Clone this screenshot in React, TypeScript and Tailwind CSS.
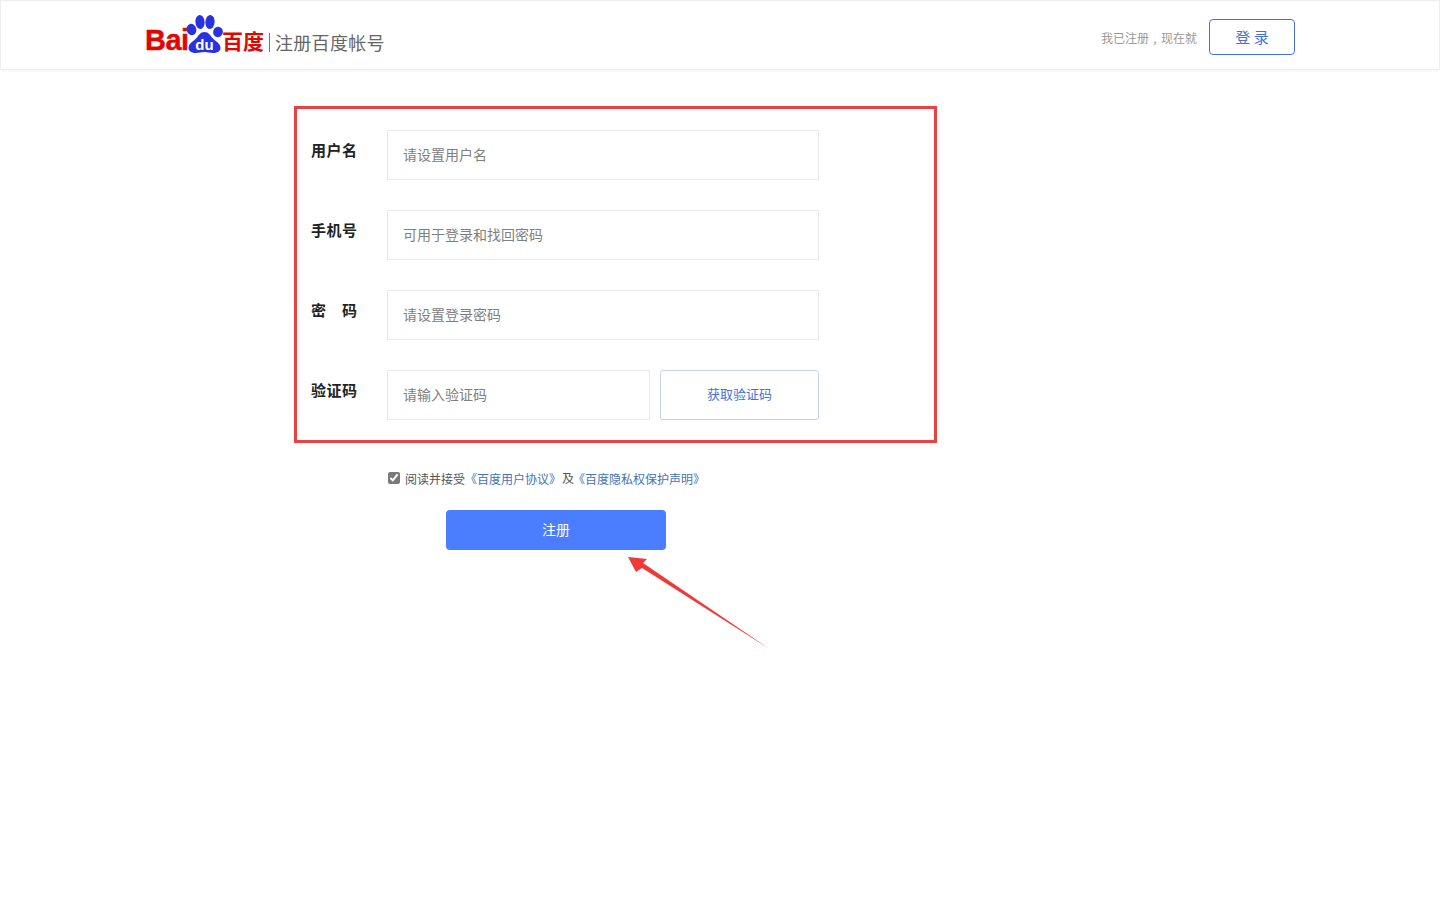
const cjk = "font-['Noto_Sans_CJK_SC','Liberation_Sans',sans-serif]";

function Logo() {
  return (
    <div className="flex items-center h-[40px] w-[119px] relative">
      <span className="font-['Liberation_Sans',sans-serif] font-bold text-[29px] leading-none text-[#e10601] tracking-[-0.5px] mt-[11px] w-[43px] [-webkit-text-stroke:0.4px_#e10601]">Bai</span>
      <svg width="37" height="40" viewBox="0 0 37 40" className="shrink-0 -ml-[2px]">
        <ellipse cx="5.500" cy="14.500" rx="4.800" ry="5.800" transform="rotate(-15 5.500 14.500)" fill="#2932e1" />
        <ellipse cx="14" cy="7" rx="4.600" ry="7" transform="rotate(-4 14 7)" fill="#2932e1" />
        <ellipse cx="24" cy="7" rx="4.600" ry="7" transform="rotate(4 24 7)" fill="#2932e1" />
        <ellipse cx="32" cy="17" rx="4.800" ry="5.200" transform="rotate(15 32 17)" fill="#2932e1" />
        <path d="M18.500 17c-4 0-5.500 3-8 6C8 26 2.500 28 2.500 33c0 3.500 3.500 5 7.500 5 3 0 5.500-1 8.500-1s5.500 1 8.500 1c4 0 7.500-1.500 7.500-5 0-5-5.500-7-8-10C24 20 22.500 17 18.500 17z" fill="#2932e1" />
        <text x="18.500" y="35" textAnchor="middle" fontFamily="Liberation Sans, sans-serif" fontWeight="700" fontSize="15" fill="#ffffff">du</text>
      </svg>
      <span className={`${cjk} font-bold text-[21px] leading-none text-[#e10601] mt-[10px] -ml-[1px] whitespace-nowrap`}>百度</span>
    </div>
  );
}

function Row({ label, placeholder, children }: { label: string[]; placeholder: string; children?: React.ReactNode }) {
  return (
    <div className="flex items-start h-[50px] mb-[30px] last:mb-0">
      <div className="w-[90px] pl-[14px]">
        <div className={`${cjk} w-[46px] flex justify-between text-[15px] leading-[40px] font-bold text-[#222]`}>
          {label.map((c) => (
            <span key={c}>{c}</span>
          ))}
        </div>
      </div>
      <input
        placeholder={placeholder}
        className={`${cjk} ${children ? "w-[263px]" : "w-[432px]"} h-[50px] border border-[#eaeaea] px-[15px] pb-[2px] text-[14px] outline-none placeholder:text-[#808080]`}
      />
      {children}
    </div>
  );
}

export default function App() {
  return (
    <div className={`${cjk} min-h-[900px] bg-white relative`}>
      <header className="h-[70px] bg-white border border-[#eeeeee] shadow-[0_1px_2px_rgba(0,0,0,0.05)] flex items-center justify-between pl-[144px] pr-[144px]">
        <div className="flex items-center">
          <Logo />
          <div className="w-px h-[19px] bg-[#777] ml-[5px] mt-[15px]" />
          <span className="text-[18px] leading-none tracking-[0.3px] text-[#666] ml-[5px] mt-[14px]">注册百度帐号</span>
        </div>
        <div className="flex items-center mt-[4px]">
          <span className="text-[12px] text-[#999] mr-[12px] mt-[2px] whitespace-nowrap">
            我已注册<span className="inline-block w-[12px] text-center">,</span>现在就
          </span>
          <button className="w-[86px] h-[36px] border border-[#4472d4] rounded-[4px] text-[15px] leading-none pb-[1px] text-[#4472d4] bg-white">登 录</button>
        </div>
      </header>

      <form className="ml-[294px] mt-[36px] w-[643px] h-[337px] border-[3px] border-[#e84243] pt-[21px]">
        <Row label={["用", "户", "名"]} placeholder="请设置用户名" />
        <Row label={["手", "机", "号"]} placeholder="可用于登录和找回密码" />
        <Row label={["密", "码"]} placeholder="请设置登录密码" />
        <Row label={["验", "证", "码"]} placeholder="请输入验证码">
          <button type="button" className="ml-[10px] w-[159px] h-[50px] border border-[#c5d5e8] rounded-[3px] pb-[2px] text-[13px] text-[#4472d4] bg-white">获取验证码</button>
        </Row>
      </form>

      <div className="ml-[388px] mt-[27px] flex items-center h-[18px] text-[12px] whitespace-nowrap">
        <input type="checkbox" defaultChecked readOnly className="w-[12px] h-[12px] m-0 accent-[#7a7a7a] -mt-[2px]" />
        <span className="ml-[5px] text-[#555]">阅读并接受</span>
        <span className="text-[#4472b4]">《百度用户协议》</span>
        <span className="text-[#555] -mt-[2px] ml-[1px]">及</span>
        <span className="text-[#4472b4] -ml-[1px]">《百度隐私权保护声明》</span>
      </div>

      <button className="block ml-[446px] mt-[22px] w-[220px] h-[40px] rounded-[4px] bg-[#4a7dff] pb-[2px] text-white text-[14px]">注册</button>

      <svg className="absolute left-[620px] top-[550px]" width="155" height="105" viewBox="620 550 155 105">
        <polygon points="628,557 647,559 643,563 768,648 642,568 636,572" fill="#f03a3a" />
      </svg>
    </div>
  );
}
